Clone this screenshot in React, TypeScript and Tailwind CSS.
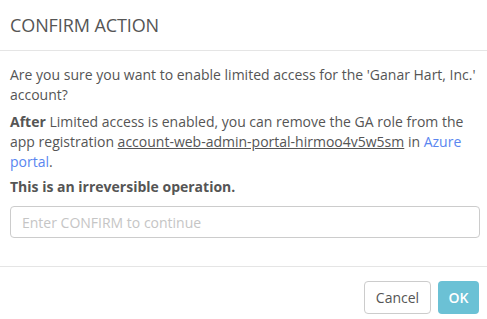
export default function App() {
  return (
    <div
      className="w-[487px] h-[319px] bg-white text-[#555] text-[14px] leading-[20px]"
      style={{ fontFamily: '"Open Sans", sans-serif' }}
    >
      <div className="h-[51px] border-b border-[#e5e5e5] px-[10px] flex items-center">
        <h4 className="text-[18px] font-normal text-[#555] tracking-[-0.1px]">CONFIRM ACTION</h4>
      </div>

      <div className="px-[10px] pt-[14px] pb-[28px] border-b border-[#e5e5e5]">
        <p className="mb-[7px]">
          Are you sure you want to enable limited access for the 'Ganar Hart, Inc.' account?
        </p>
        <p className="mb-[5px]">
          <strong className="font-bold">After</strong> Limited access is enabled, you can remove the GA
          role from the app registration{" "}
          <span className="underline">account-web-admin-portal-hirmoo4v5w5sm</span> in{" "}
          <a href="#" className="text-[#5a86f0]">
            Azure portal
          </a>
          .
        </p>
        <p className="font-bold mb-[9px]">This is an irreversible operation.</p>
        <input
          type="text"
          placeholder="Enter CONFIRM to continue"
          className="block w-[470px] h-[32px] rounded-[4px] border border-[#ccc] px-[11px] text-[14px] placeholder:text-[#c5c5c5] outline-none"
        />
      </div>

      <div className="flex justify-end gap-[7px] pt-[14px] pr-[8px]">
        <button
          type="button"
          className="h-[33px] w-[67px] rounded-[4px] border border-[#ccc] bg-white text-[14px] text-[#555]"
        >
          Cancel
        </button>
        <button
          type="button"
          className="h-[33px] w-[41px] rounded-[4px] bg-[#6bc1d5] text-[14px] font-semibold text-white"
        >
          OK
        </button>
      </div>
    </div>
  );
}
